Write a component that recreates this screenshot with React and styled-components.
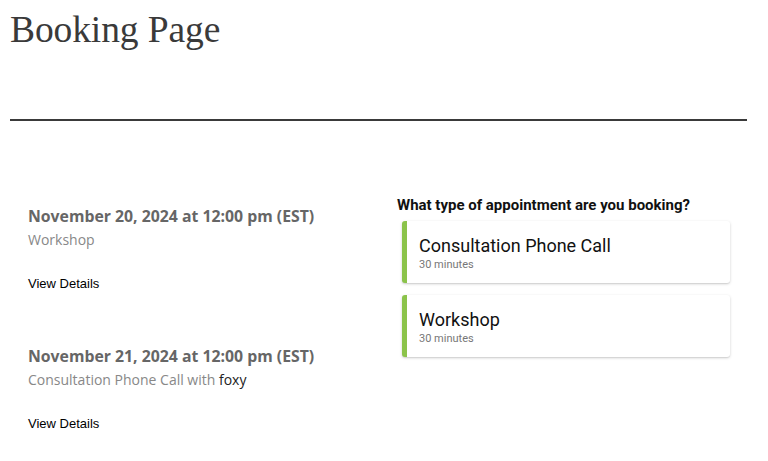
import React from "react";
import styled, { createGlobalStyle } from "styled-components";

const Global = createGlobalStyle`
  html, body { margin: 0; padding: 0; background: #fff; }
  body { font-family: "Open Sans", sans-serif; }
`;

const Page = styled.div`
  padding: 0 21px 0 10px;
`;

const Title = styled.h1`
  margin: 0;
  padding-top: 7px;
  font-family: "Liberation Serif", serif;
  font-weight: 400;
  font-size: 37.5px;
  line-height: 45px;
  color: #3a3a3a;
  letter-spacing: -0.1px;
`;

const Divider = styled.hr`
  margin: 67px 0 0;
  border: 0;
  border-top: 2px solid #3a3a3a;
`;

const Columns = styled.div`
  display: grid;
  grid-template-columns: 387px 1fr;
  padding-top: 75px;
`;

const Appointments = styled.div`
  padding: 8px 0 0 18px;
  display: flex;
  flex-direction: column;
  gap: 52px;
`;

const Appointment = styled.div`
  display: flex;
  flex-direction: column;
`;

const DateLine = styled.div`
  font-family: "Open Sans", sans-serif;
  font-weight: 700;
  font-size: 15.8px;
  line-height: 24px;
  color: #666;
`;

const Service = styled.div`
  font-family: "Open Sans", sans-serif;
  font-size: 14px;
  line-height: 24px;
  color: #888;
`;

const Staff = styled.span`
  color: #222;
`;

const DetailsLink = styled.a`
  margin-top: 24px;
  font-family: "Liberation Sans", Arial, sans-serif;
  font-size: 13px;
  line-height: 16px;
  color: #000;
  text-decoration: none;
`;

const Booking = styled.div`
  display: flex;
  flex-direction: column;
`;

const Question = styled.div`
  font-family: Roboto, sans-serif;
  font-weight: 700;
  font-size: 15px;
  line-height: 18px;
  color: #111;
  margin-bottom: 7px;
`;

const TypeList = styled.div`
  display: flex;
  flex-direction: column;
  gap: 12px;
  padding-left: 5px;
  width: 328px;
`;

const TypeCard = styled.div`
  display: flex;
  flex-direction: column;
  justify-content: center;
  height: 62px;
  box-sizing: border-box;
  padding: 4px 12px 0 12px;
  background: #fff;
  border-left: 5px solid #8bc34a;
  border-radius: 3px;
  box-shadow: 0 1px 3px rgba(0, 0, 0, 0.18), 0 1px 1px rgba(0, 0, 0, 0.06);
`;

const TypeName = styled.div`
  font-family: Roboto, sans-serif;
  font-size: 18px;
  line-height: 22px;
  color: #111;
`;

const TypeLength = styled.div`
  font-family: Roboto, sans-serif;
  font-size: 11px;
  line-height: 16px;
  color: #777;
`;

const appointments = [
  { date: "November 20, 2024 at 12:00 pm (EST)", service: "Workshop" },
  {
    date: "November 21, 2024 at 12:00 pm (EST)",
    service: "Consultation Phone Call with ",
    staff: "foxy",
  },
];

const types = [
  { name: "Consultation Phone Call", length: "30 minutes" },
  { name: "Workshop", length: "30 minutes" },
];

export default function App() {
  return (
    <>
      <Global />
      <Page>
        <Title>Booking Page</Title>
        <Divider />
        <Columns>
          <Appointments>
            {appointments.map((a) => (
              <Appointment key={a.date}>
                <DateLine>{a.date}</DateLine>
                <Service>
                  {a.service}
                  {a.staff && <Staff>{a.staff}</Staff>}
                </Service>
                <DetailsLink href="#">View Details</DetailsLink>
              </Appointment>
            ))}
          </Appointments>
          <Booking>
            <Question>What type of appointment are you booking?</Question>
            <TypeList>
              {types.map((t) => (
                <TypeCard key={t.name}>
                  <TypeName>{t.name}</TypeName>
                  <TypeLength>{t.length}</TypeLength>
                </TypeCard>
              ))}
            </TypeList>
          </Booking>
        </Columns>
      </Page>
    </>
  );
}
